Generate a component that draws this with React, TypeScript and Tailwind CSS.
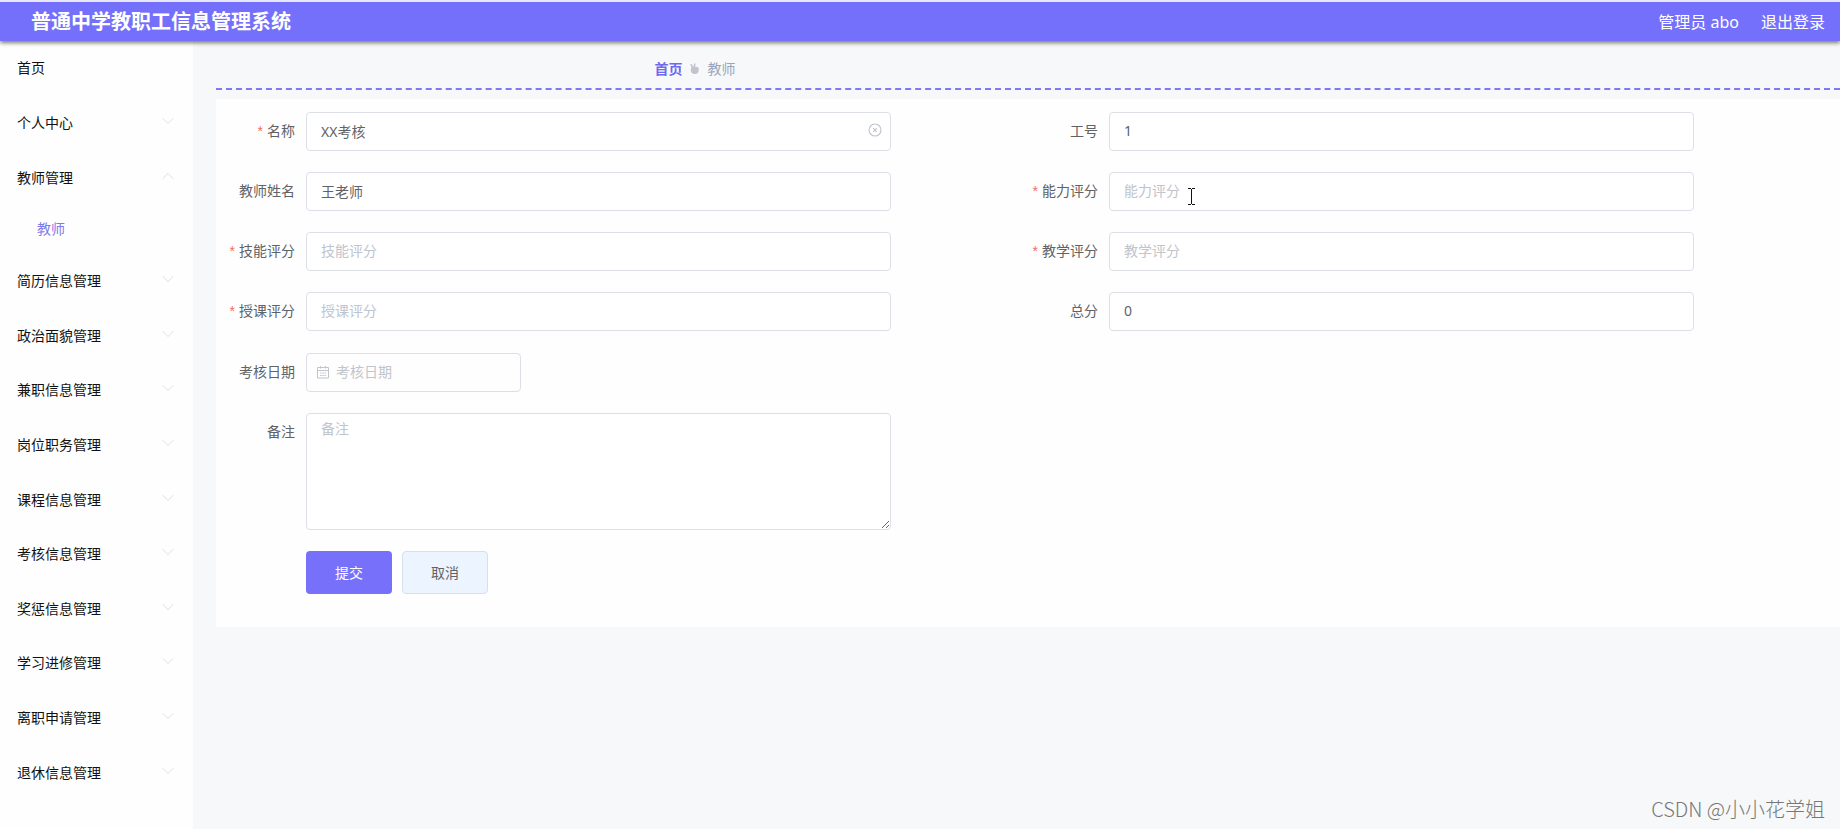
import type { ReactNode } from "react";
import { ChevronDown, ChevronUp } from "lucide-react";

const menuItems = [
  { label: "首页" },
  { label: "个人中心", arrow: true },
  { label: "教师管理", arrow: true, children: ["教师"] },
  { label: "简历信息管理", arrow: true },
  { label: "政治面貌管理", arrow: true },
  { label: "兼职信息管理", arrow: true },
  { label: "岗位职务管理", arrow: true },
  { label: "课程信息管理", arrow: true },
  { label: "考核信息管理", arrow: true },
  { label: "奖惩信息管理", arrow: true },
  { label: "学习进修管理", arrow: true },
  { label: "离职申请管理", arrow: true },
  { label: "退休信息管理", arrow: true },
];

const inputClass =
  "block h-[39px] w-full rounded border border-[#dcdfe6] bg-white px-[14px] pb-[2px] text-sm text-[#606266] outline-none placeholder:text-[#c0c4cc] placeholder:opacity-100 focus:border-[#7670fb]";

type FieldProps = {
  id: string;
  label: string;
  required?: boolean;
  children: ReactNode;
};

const Field = ({ id, label, required, children }: FieldProps) => {
  return (
    <div className="flex">
      <label
        htmlFor={id}
        className="w-[90px] shrink-0 pr-[11px] text-right text-sm leading-[38px] text-[#606266]"
      >
        {required && (
          <span className="mr-1 font-['Liberation_Sans',sans-serif] text-[#f56c6c]">
            *
          </span>
        )}
        {label}
      </label>
      <div className="min-w-0 flex-1">
        <div className="relative w-[82%]">{children}</div>
      </div>
    </div>
  );
};

const CalendarIcon = () => (
  <svg
    className="pointer-events-none absolute left-[10px] top-3 size-[14px]"
    viewBox="0 0 14 14"
    fill="none"
    stroke="#c0c4cc"
  >
    <path d="M1.500 2.500h11v10.500h-11zM1.500 5.500h11M4.500 1v2.500M9.500 1v2.500" />
    <path d="M4 8h1.500M6.300 8h1.500M8.600 8h1.500M4 10.500h1.500M6.300 10.500h1.500M8.600 10.500h1.500" />
  </svg>
);

const ClearIcon = () => (
  <svg className="size-[14px]" viewBox="0 0 14 14" fill="none" stroke="#c0c4cc">
    <circle cx="7" cy="7" r="6" strokeWidth="1.1" />
    <path d="M5.200 5.200l3.600 3.600M8.800 5.200l-3.600 3.600" strokeWidth="1.200" />
  </svg>
);

const HandIcon = () => (
  <svg className="mx-2 h-[11px] w-[9px]" viewBox="0 0 9 11" fill="#c0c4cc">
    <path d="M.5 1.500C.9.8 1.700.9 2 1.600l1.200 2.300.9-3.200C4.300 0 5.600.1 5.500 1L5.100 4.100l1-.3c.5-.1.9.1 1.100.5.9-.1 1.500.4 1.500 1.200v2.100C8.700 9.800 7.200 11 4.900 11 2.400 11 .9 9.700.8 7.600V5.900c0-.7.4-1.200 1-1.400L.5 2.400C.3 2.100.3 1.800.5 1.500z" />
  </svg>
);

const Header = () => {
  return (
    <header className="relative z-10 flex h-[41px] items-center justify-between border-t-2 border-[#e8e8f8] bg-[#7570fb] pl-[31px] pr-[15px] text-white shadow-[0_2px_4px_rgba(40,40,0,0.6)]">
      <h1 className="text-xl font-bold leading-6">
        普通中学教职工信息管理系统
      </h1>
      <div className="flex items-center gap-[22px] text-base">
        <span>管理员 abo</span>
        <a href="#logout">退出登录</a>
      </div>
    </header>
  );
};

const Sidebar = () => {
  return (
    <nav className="flex w-[193px] shrink-0 flex-col bg-[#fefefe] pb-[29px] text-sm text-[#111]">
      {menuItems.map((item) => (
        <div
          key={item.label}
          className={item.children ? "contents" : "flex flex-1 flex-col"}
        >
          <a
            href={`#${item.label}`}
            className="flex flex-1 items-center justify-between pl-[17px] pr-[15px]"
          >
            {item.label}
            {item.arrow &&
              (item.children ? (
                <ChevronUp className="mb-1 size-5 text-[#d8d8dc]" strokeWidth={1} />
              ) : (
                <ChevronDown className="mb-1 size-5 text-[#d8d8dc]" strokeWidth={1} />
              ))}
          </a>
          {item.children?.map((child) => (
            <a
              key={child}
              href={`#${child}`}
              className="flex h-[49px] items-center pl-[37px] text-[#7f79ea]"
            >
              {child}
            </a>
          ))}
        </div>
      ))}
    </nav>
  );
};

const App = () => {
  return (
    <div className="relative flex min-h-screen flex-col bg-[#f6f8fa] font-['Noto_Sans','Noto_Sans_CJK_SC',sans-serif]">
      <Header />
      <div className="flex flex-1">
        <Sidebar />
        <main className="min-w-0 flex-1 pl-[23px]">
          {/* Breadcrumb */}
          <div className="flex h-[49px] items-center border-b-2 border-dashed border-[#7f79f5] pl-[27%] pt-2 text-sm">
            <a href="#home" className="font-bold text-[#6f68ee]">
              首页
            </a>
            <HandIcon />
            <span className="text-[#9aa5bd]">教师</span>
          </div>

          {/* Form */}
          <form className="mt-[9px] bg-[#fefefe] pb-[33px] pr-[18px] pt-[13px]">
            <div className="grid grid-cols-2 gap-y-[21px]">
              <Field id="name" label="名称" required>
                <input id="name" className={inputClass} defaultValue="XX考核" />
                <button
                  type="button"
                  aria-label="清空"
                  className="absolute right-[9px] top-[11px]"
                >
                  <ClearIcon />
                </button>
              </Field>
              <Field id="number" label="工号">
                <input id="number" className={inputClass} defaultValue="1" />
              </Field>
              <Field id="teacher" label="教师姓名">
                <input id="teacher" className={inputClass} defaultValue="王老师" />
              </Field>
              <Field id="ability" label="能力评分" required>
                <input id="ability" className={inputClass} placeholder="能力评分" />
                <svg
                  className="pointer-events-none absolute left-[79px] top-4 h-[17px] w-[7px]"
                  viewBox="0 0 7 17"
                  fill="none"
                  stroke="#111"
                >
                  <path d="M0 .5h3M4 .5h3M3.500 1v15M0 16.500h3M4 16.500h3" />
                </svg>
              </Field>
              <Field id="skill" label="技能评分" required>
                <input id="skill" className={inputClass} placeholder="技能评分" />
              </Field>
              <Field id="teaching" label="教学评分" required>
                <input id="teaching" className={inputClass} placeholder="教学评分" />
              </Field>
              <Field id="lecture" label="授课评分" required>
                <input id="lecture" className={inputClass} placeholder="授课评分" />
              </Field>
              <Field id="total" label="总分">
                <input id="total" className={inputClass} defaultValue="0" />
              </Field>
            </div>

            <div className="mt-[22px] flex w-1/2 flex-col gap-[21px]">
              <Field id="date" label="考核日期">
                <div className="relative w-[215px]">
                  <CalendarIcon />
                  <input
                    id="date"
                    className="block h-[39px] w-full rounded border border-[#dcdfe6] bg-transparent pb-[2px] pl-[29px] pr-3 text-sm text-[#606266] outline-none placeholder:text-[#c0c4cc] placeholder:opacity-100"
                    placeholder="考核日期"
                  />
                </div>
              </Field>
              <Field id="remark" label="备注">
                <textarea
                  id="remark"
                  className="block h-[117px] w-full resize rounded border border-[#dcdfe6] bg-white px-[14px] py-[5px] text-sm text-[#606266] outline-none placeholder:text-[#c0c4cc] placeholder:opacity-100"
                  placeholder="备注"
                />
              </Field>
            </div>

            <div className="mt-[21px] flex gap-[10px] pl-[90px] text-sm">
              <button
                type="submit"
                className="h-[43px] w-[86px] rounded bg-[#7670fb] text-white"
              >
                提交
              </button>
              <button
                type="button"
                className="h-[43px] w-[86px] rounded border border-[#d6e0ec] bg-[#ecf5ff] text-[#606266]"
              >
                取消
              </button>
            </div>
          </form>
        </main>
      </div>

      <div className="absolute bottom-[6px] right-[15px] font-['Noto_Sans_CJK_SC',sans-serif] text-xl font-light text-[#777]">
        CSDN @小小花学姐
      </div>
    </div>
  );
};

export default App;
